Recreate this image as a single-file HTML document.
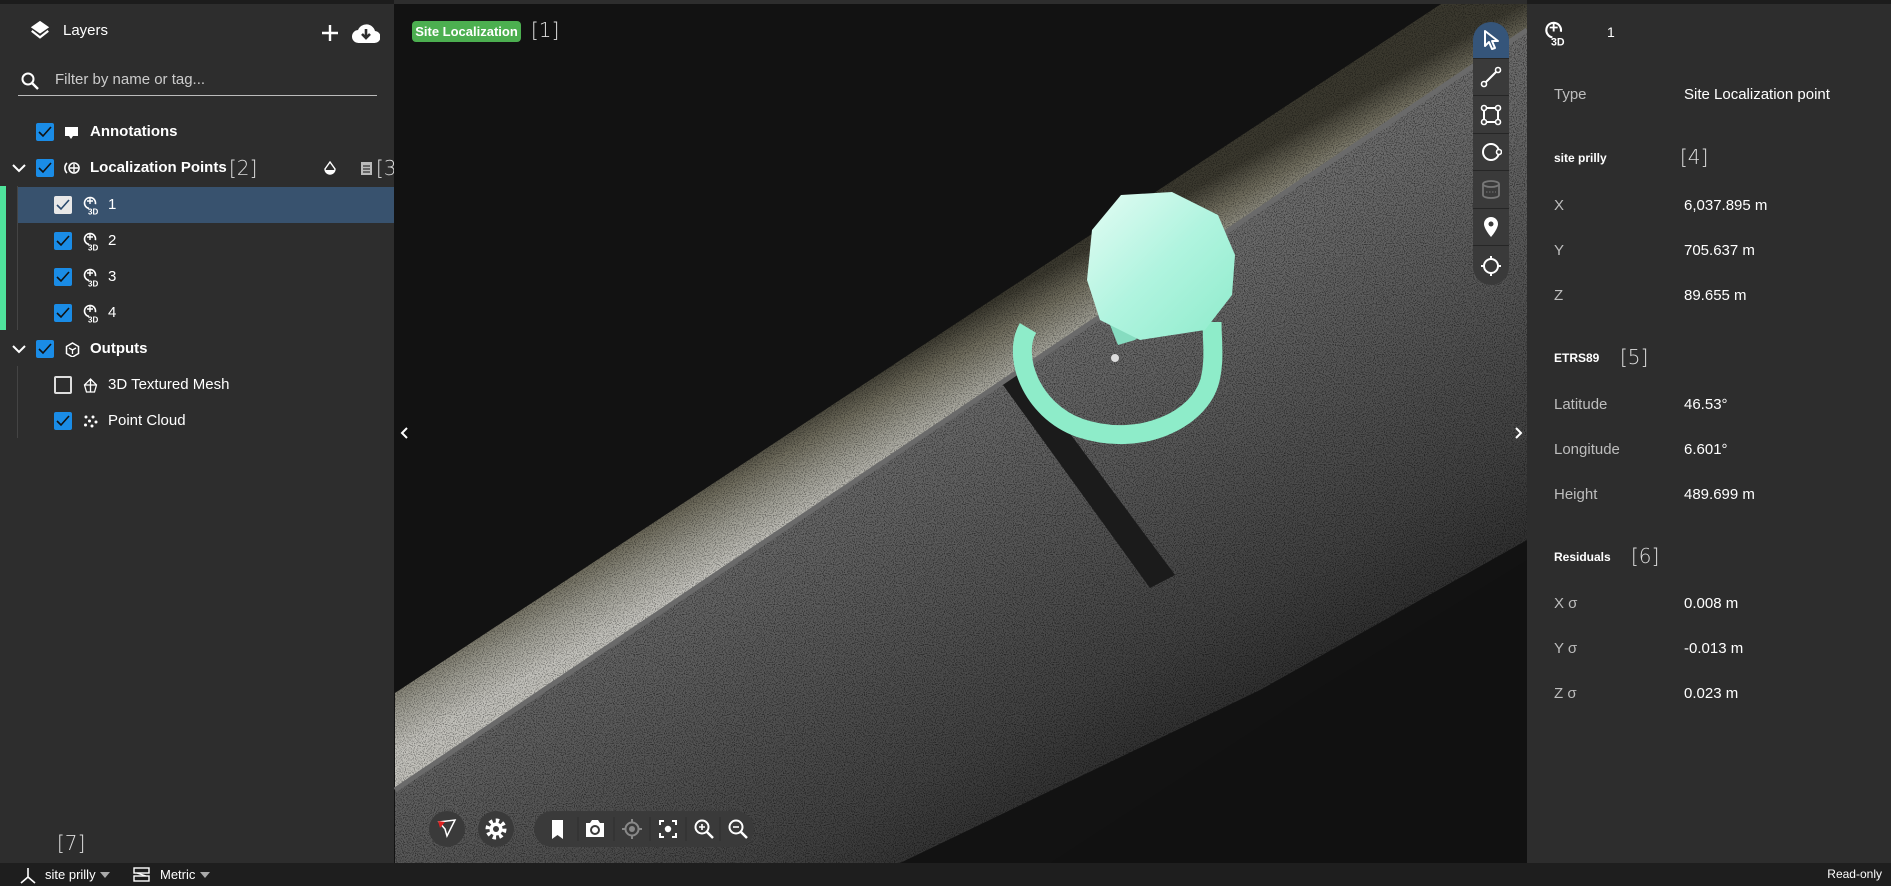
<!DOCTYPE html>
<html><head><meta charset="utf-8">
<style>
*{box-sizing:border-box;margin:0;padding:0}
body{width:1891px;height:886px;overflow:hidden;background:#2d2d2d;font-family:"Liberation Sans",sans-serif;color:#fff;position:relative}
.abs{position:absolute}
#left{left:0;top:0;width:394px;height:863px;background:#2d2d2d;border-top:4px solid #1c1c1c}
#right{left:1527px;top:0;width:364px;height:863px;background:#2d2d2d;border-top:4px solid #1c1c1c}
#vp{left:394px;top:4px;width:1133px;height:859px;background:#121212;overflow:hidden}
#bar{left:0;top:863px;width:1891px;height:23px;background:#1e1e1e;font-size:13px}
.row{position:absolute;left:0;width:394px;height:36px;font-size:15px}
.cb{position:absolute;width:18px;height:18px;background:#1a8ce6;border-radius:2px;top:9px}
.cb svg{position:absolute;left:2px;top:3px}
.lbl{position:absolute;top:9px;font-size:15px}
.ann{font-family:"DejaVu Sans",sans-serif;color:#ddd;font-weight:300}
.k{position:absolute;left:27px;font-size:15px;color:#bdbdbd}
.v{position:absolute;left:157px;font-size:15px;color:#fff}
.h{position:absolute;left:27px;font-size:12px;font-weight:bold}
.tb{position:absolute;left:0;width:36px;height:37px;border-bottom:1px solid #262626;display:flex;align-items:center;justify-content:center}
</style></head><body>

<div id="left" class="abs">
  <svg class="abs" style="left:29px;top:15px" width="22" height="22" viewBox="0 0 24 24"><path d="M12 2L2 9l10 7 10-7z" fill="#fff"/><path d="M3 13l9 7 9-7" stroke="#fff" stroke-width="2.4" fill="none"/></svg>
  <div class="abs" style="left:63px;top:18px;font-size:15px">Layers</div>
  <svg class="abs" style="left:321px;top:20px" width="18" height="18"><path d="M9 1v16M1 9h16" stroke="#fff" stroke-width="2.4"/></svg>
  <svg class="abs" style="left:352px;top:19px" width="28" height="21" viewBox="0 0 28 21"><path d="M7 20h15a6 6 0 0 0 1-12A9 9 0 0 0 6 7a6.5 6.5 0 0 0 1 13z" fill="#fff"/><path d="M14 6v8M10 11l4 4 4-4" stroke="#2d2d2d" stroke-width="2.6" fill="none"/></svg>
  <svg class="abs" style="left:20px;top:67px" width="20" height="20"><circle cx="8" cy="8" r="5.5" stroke="#fff" stroke-width="2" fill="none"/><path d="M12 12l6 6" stroke="#fff" stroke-width="2.4"/></svg>
  <div class="abs" style="left:55px;top:67px;font-size:15px;color:#ccc">Filter by name or tag...</div>
  <div class="abs" style="left:18px;top:91px;width:359px;height:1px;background:#bbb"></div>

  <div class="abs" style="left:0;top:182px;width:6px;height:144px;background:#4fe39c"></div>
  <div class="abs" style="left:17px;top:182px;width:1px;height:144px;background:#444"></div>
  <div class="abs" style="left:17px;top:362px;width:1px;height:72px;background:#444"></div>

  <div class="row" style="top:110px">
    <div class="cb" style="left:36px"><svg width="14" height="12"><path d="M1 6l4 4 8-9" stroke="#111" stroke-width="1.6" fill="none"/></svg></div>
    <svg class="abs" style="left:64px;top:12px" width="15" height="14"><path d="M1 1h13v9H9l-2 3-2-3H1z" fill="#fff"/></svg>
    <div class="lbl" style="left:90px;font-weight:bold">Annotations</div>
  </div>
  <div class="row" style="top:146px">
    <svg class="abs" style="left:12px;top:13px" width="14" height="10"><path d="M1 2l6 6 6-6" stroke="#fff" stroke-width="2" fill="none"/></svg>
    <div class="cb" style="left:36px"><svg width="14" height="12"><path d="M1 6l4 4 8-9" stroke="#111" stroke-width="1.6" fill="none"/></svg></div>
    <svg class="abs" style="left:63px;top:10px" width="18" height="16"><path d="M4 3a7 7 0 0 0 0 10" stroke="#fff" stroke-width="1.6" fill="none"/><circle cx="11" cy="8" r="5" stroke="#fff" stroke-width="1.6" fill="none"/><path d="M11 4v8M7 8h8" stroke="#fff" stroke-width="1.4"/></svg>
    <div class="lbl" style="left:90px;font-weight:bold">Localization Points</div>
    <div class="lbl ann" style="left:229px;top:6px;font-size:20px">[2]</div>
    <svg class="abs" style="left:324px;top:11px" width="12" height="14"><path d="M6 1L1 8a5 5 0 0 0 10 0z" stroke="#fff" fill="none" stroke-width="1.4"/><path d="M1.5 9a4.6 4.6 0 0 0 9 0z" fill="#fff"/></svg>
    <svg class="abs" style="left:360px;top:10px" width="13" height="16"><rect x="1" y="2" width="11" height="13" fill="#bbb"/><path d="M3 6h7M3 9h7M3 12h7" stroke="#333" stroke-width="1.2"/></svg>
    <div class="lbl ann" style="left:376px;top:6px;font-size:20px">[3]</div>
  </div>
  <div class="row" style="top:183px;left:18px;width:376px;background:#38526e"></div>
  <div class="row" style="top:183px">
    <div class="cb" style="left:54px;background:#e8e8e8"><svg width="14" height="12"><path d="M1 6l4 4 8-9" stroke="#2a4a6e" stroke-width="1.6" fill="none"/></svg></div>
    <svg class="abs" style="left:82px;top:9px" width="18" height="19" viewBox="0 0 18 19"><circle cx="8" cy="7" r="5.5" stroke="#fff" stroke-width="1.6" fill="none" stroke-dasharray="26 9" transform="rotate(100 8 7)"/><path d="M8 2v6M5 5h6" stroke="#fff" stroke-width="1.4"/><text x="6" y="18.5" font-size="8" font-weight="bold" fill="#fff" font-family="Liberation Sans">3D</text></svg>
    <div class="lbl" style="left:108px">1</div>
  </div>
  <div class="row" style="top:219px">
    <div class="cb" style="left:54px"><svg width="14" height="12"><path d="M1 6l4 4 8-9" stroke="#111" stroke-width="1.6" fill="none"/></svg></div>
    <svg class="abs" style="left:82px;top:9px" width="18" height="19" viewBox="0 0 18 19"><circle cx="8" cy="7" r="5.5" stroke="#fff" stroke-width="1.6" fill="none" stroke-dasharray="26 9" transform="rotate(100 8 7)"/><path d="M8 2v6M5 5h6" stroke="#fff" stroke-width="1.4"/><text x="6" y="18.5" font-size="8" font-weight="bold" fill="#fff" font-family="Liberation Sans">3D</text></svg>
    <div class="lbl" style="left:108px">2</div>
  </div>
  <div class="row" style="top:255px">
    <div class="cb" style="left:54px"><svg width="14" height="12"><path d="M1 6l4 4 8-9" stroke="#111" stroke-width="1.6" fill="none"/></svg></div>
    <svg class="abs" style="left:82px;top:9px" width="18" height="19" viewBox="0 0 18 19"><circle cx="8" cy="7" r="5.5" stroke="#fff" stroke-width="1.6" fill="none" stroke-dasharray="26 9" transform="rotate(100 8 7)"/><path d="M8 2v6M5 5h6" stroke="#fff" stroke-width="1.4"/><text x="6" y="18.5" font-size="8" font-weight="bold" fill="#fff" font-family="Liberation Sans">3D</text></svg>
    <div class="lbl" style="left:108px">3</div>
  </div>
  <div class="row" style="top:291px">
    <div class="cb" style="left:54px"><svg width="14" height="12"><path d="M1 6l4 4 8-9" stroke="#111" stroke-width="1.6" fill="none"/></svg></div>
    <svg class="abs" style="left:82px;top:9px" width="18" height="19" viewBox="0 0 18 19"><circle cx="8" cy="7" r="5.5" stroke="#fff" stroke-width="1.6" fill="none" stroke-dasharray="26 9" transform="rotate(100 8 7)"/><path d="M8 2v6M5 5h6" stroke="#fff" stroke-width="1.4"/><text x="6" y="18.5" font-size="8" font-weight="bold" fill="#fff" font-family="Liberation Sans">3D</text></svg>
    <div class="lbl" style="left:108px">4</div>
  </div>
  <div class="row" style="top:327px">
    <svg class="abs" style="left:12px;top:13px" width="14" height="10"><path d="M1 2l6 6 6-6" stroke="#fff" stroke-width="2" fill="none"/></svg>
    <div class="cb" style="left:36px"><svg width="14" height="12"><path d="M1 6l4 4 8-9" stroke="#111" stroke-width="1.6" fill="none"/></svg></div>
    <svg class="abs" style="left:65px;top:11px" width="15" height="15"><path d="M7.5 1l6 3.5v7l-6 3.5-6-3.5v-7z" stroke="#fff" stroke-width="1.5" fill="none"/><path d="M4 6l3.5 2 3.5-2M7.5 8v4" stroke="#fff" stroke-width="1.3" fill="none"/></svg>
    <div class="lbl" style="left:90px;font-weight:bold">Outputs</div>
  </div>
  <div class="row" style="top:363px">
    <div class="cb" style="left:54px;background:none;border:2px solid #ddd"></div>
    <svg class="abs" style="left:83px;top:11px" width="15" height="15"><path d="M7.5 1l6 6-2 7h-8l-2-7z M7.5 1v13M1.5 7h12" stroke="#fff" stroke-width="1.3" fill="none"/></svg>
    <div class="lbl" style="left:108px">3D Textured Mesh</div>
  </div>
  <div class="row" style="top:399px">
    <div class="cb" style="left:54px"><svg width="14" height="12"><path d="M1 6l4 4 8-9" stroke="#111" stroke-width="1.6" fill="none"/></svg></div>
    <svg class="abs" style="left:83px;top:11px" width="15" height="15" fill="#fff"><circle cx="3" cy="3" r="1.5"/><circle cx="10" cy="3" r="1.5"/><circle cx="6.5" cy="7" r="1.5"/><circle cx="13" cy="8" r="1.5"/><circle cx="2.5" cy="11" r="1.5"/><circle cx="9" cy="12" r="1.5"/></svg>
    <div class="lbl" style="left:108px">Point Cloud</div>
  </div>
  <div class="abs ann" style="left:57px;top:827px;font-size:20px">[7]</div>
</div>

<div id="vp" class="abs">
<svg width="1133" height="859" viewBox="394 4 1133 859">
  <defs>
    <filter id="n" x="0" y="0" width="100%" height="100%">
      <feTurbulence type="fractalNoise" baseFrequency="0.9" numOctaves="1" seed="3" result="t"/>
      <feColorMatrix type="matrix" values="0 0 0 0 0  0 0 0 0 0  0 0 0 0 0  0 0 0 -5 2.6" in="t" result="d"/>
      <feComposite in="d" in2="SourceGraphic" operator="in"/>
    </filter>
    <linearGradient id="gr" x1="0.2" y1="0.1" x2="0.8" y2="0.9">
      <stop offset="0" stop-color="#858380"/><stop offset="0.45" stop-color="#6a6a6a"/><stop offset="0.8" stop-color="#404040"/><stop offset="1" stop-color="#1e1e1e"/>
    </linearGradient>
    <linearGradient id="cu" gradientUnits="userSpaceOnUse" x1="900" y1="355" x2="948" y2="440">
      <stop offset="0" stop-color="#3a382e"/><stop offset="0.3" stop-color="#6e6b5c"/><stop offset="0.65" stop-color="#9d9c92"/><stop offset="1" stop-color="#c2c1bb"/>
    </linearGradient>
    <linearGradient id="sp" x1="0" y1="0" x2="1" y2="1">
      <stop offset="0" stop-color="#e4fcf4"/><stop offset="0.5" stop-color="#b0f4df"/><stop offset="1" stop-color="#8eebcb"/>
    </linearGradient>
  </defs>
  <polygon points="395,790 1527,30 1527,540 1260,690 900,863 395,863" fill="url(#gr)"/>
  <polygon points="395,790 1527,30 1527,540 1260,690 900,863 395,863" fill="#000" filter="url(#n)" opacity="0.45"/>
  <polygon points="1050,863 1300,700 1527,560 1527,863" fill="#121212" opacity="0.9"/>
  <polygon points="995,374 1020,366 1175,575 1150,588" fill="#1b1b1b"/>
  <polygon points="395,693 1441,4 1527,4 1527,30 395,790" fill="url(#cu)"/>
  <polygon points="395,693 1441,4 1527,4 1527,30 395,790" fill="#000" filter="url(#n)" opacity="0.35"/>
  <path d="M395,790 L1527,30" stroke="#6a6a6a" stroke-width="5"/>
  <path d="M1028,328 C1012,355 1030,410 1080,428 C1140,448 1200,420 1210,380 C1215,360 1212,340 1212,322" stroke="#8eecc9" stroke-width="19" fill="none"/>
  <polygon points="1100,300 1170,310 1135,340 1118,345" fill="#86dcc0"/>
  <polygon points="1121,195 1172,192 1218,215 1235,255 1232,295 1205,330 1140,340 1100,320 1087,280 1092,230" fill="url(#sp)"/>
  <circle cx="1115" cy="358" r="4" fill="#ddd"/>
</svg>
  <div class="abs" style="left:18px;top:17px;width:109px;height:21px;background:#4caf50;border-radius:4px;font-size:13px;font-weight:bold;line-height:21px;text-align:center">Site Localization</div>
  <div class="abs ann" style="left:137px;top:14px;font-size:20px">[1]</div>
  <svg class="abs" style="left:5px;top:422px" width="10" height="14"><path d="M8 2L3 7l5 5" stroke="#fff" stroke-width="2" fill="none"/></svg>
  <svg class="abs" style="left:1120px;top:422px" width="10" height="14"><path d="M2 2l5 5-5 5" stroke="#fff" stroke-width="2" fill="none"/></svg>
  <div class="abs" style="left:1079px;top:18px;width:36px;height:263px;background:#3a3a3a;border-radius:18px;overflow:hidden">
    <div class="tb" style="top:0;background:#35557a"><svg width="20" height="22"><path d="M4 2v15l4-4 3 7 3-1-3-7h6z" stroke="#fff" stroke-width="2" fill="none" stroke-linejoin="round"/></svg></div>
    <div class="tb" style="top:37px"><svg width="22" height="22"><path d="M5 17L17 5" stroke="#fff" stroke-width="2"/><circle cx="4" cy="18" r="2.5" stroke="#fff" stroke-width="1.6" fill="#3a3a3a"/><circle cx="18" cy="4" r="2.5" stroke="#fff" stroke-width="1.6" fill="#3a3a3a"/></svg></div>
    <div class="tb" style="top:75px"><svg width="22" height="22"><rect x="4" y="4" width="14" height="14" stroke="#fff" stroke-width="2" fill="none"/><g stroke="#fff" stroke-width="1.6" fill="#3a3a3a"><circle cx="4" cy="4" r="2.5"/><circle cx="18" cy="4" r="2.5"/><circle cx="4" cy="18" r="2.5"/><circle cx="18" cy="18" r="2.5"/></g></svg></div>
    <div class="tb" style="top:112px"><svg width="22" height="22"><circle cx="11" cy="11" r="8" stroke="#fff" stroke-width="2" fill="none"/><circle cx="19" cy="11" r="2.5" stroke="#fff" stroke-width="1.6" fill="#3a3a3a"/></svg></div>
    <div class="tb" style="top:150px"><svg width="22" height="22"><ellipse cx="11" cy="5" rx="8" ry="3" stroke="#777" stroke-width="1.8" fill="none"/><path d="M3 5v11c0 4 16 4 16 0V5" stroke="#777" stroke-width="1.8" fill="none"/><path d="M6 13h10" stroke="#777" stroke-dasharray="1.5 1.5"/></svg></div>
    <div class="tb" style="top:187px"><svg width="22" height="22"><path d="M11 21s-7-8-7-13a7 7 0 0 1 14 0c0 5-7 13-7 13z" fill="#fff"/><circle cx="11" cy="8" r="2.5" fill="#3a3a3a"/></svg></div>
    <div class="tb" style="top:225px;border:0"><svg width="22" height="22"><circle cx="11" cy="11" r="7" stroke="#fff" stroke-width="2" fill="none"/><path d="M11 1v4M11 17v4M1 11h4M17 11h4" stroke="#fff" stroke-width="2"/></svg></div>
  </div>
  <div class="abs" style="left:35px;top:807px;width:36px;height:36px;border-radius:18px;background:#3a3a3a"><svg width="36" height="36"><path d="M10 11l16-2-8 16-2-7z" stroke="#fff" stroke-width="1.5" fill="none"/><path d="M9 10l7 1-5 6z" fill="#e02020"/></svg></div>
  <div class="abs" style="left:84px;top:807px;width:36px;height:36px;border-radius:18px;background:#3a3a3a"><svg width="36" height="36"><circle cx="18" cy="18" r="8" fill="none" stroke="#fff" stroke-width="5" stroke-dasharray="3.2 3"/><circle cx="18" cy="18" r="6.5" fill="#fff"/><circle cx="18" cy="18" r="3" fill="#3a3a3a"/></svg></div>
  <div class="abs" style="left:140px;top:807px;width:220px;height:36px;border-radius:18px;background:#3a3a3a">
    <svg width="220" height="36">
      <path d="M18 9h11v19l-5.5-4-5.5 4z" fill="#fff"/>
      <path d="M52 12h4l2-3h6l2 3h4v14H52z" fill="#fff"/><circle cx="61" cy="19" r="4" stroke="#3a3a3a" stroke-width="2" fill="none"/>
      <circle cx="98" cy="18" r="6.5" stroke="#888" stroke-width="2" fill="none"/><circle cx="98" cy="18" r="3" fill="#888"/><path d="M98 8v3M98 25v3M88 18h3M105 18h3" stroke="#888" stroke-width="2"/>
      <path d="M126 14v-4h4M138 10h4v4M142 22v4h-4M130 26h-4v-4" stroke="#fff" stroke-width="2" fill="none"/><circle cx="134" cy="18" r="3.2" fill="#fff"/>
      <circle cx="168" cy="16" r="6.5" stroke="#fff" stroke-width="2" fill="none"/><path d="M173 21l6 6" stroke="#fff" stroke-width="2.5"/><path d="M168 13v6M165 16h6" stroke="#fff" stroke-width="1.6"/>
      <circle cx="202" cy="16" r="6.5" stroke="#fff" stroke-width="2" fill="none"/><path d="M207 21l6 6" stroke="#fff" stroke-width="2.5"/><path d="M199 16h6" stroke="#fff" stroke-width="1.6"/>
      <path d="M44 6v24M80 6v24M116 6v24M152 6v24M186 6v24" stroke="#2e2e2e" stroke-width="1"/>
    </svg>
  </div>
</div>

<div id="right" class="abs">
  <svg class="abs" style="left:16px;top:16px" width="24" height="27" viewBox="0 0 18 19"><circle cx="8" cy="7" r="5.5" stroke="#fff" stroke-width="1.6" fill="none" stroke-dasharray="26 9" transform="rotate(100 8 7)"/><path d="M8 2v6M5 5h6" stroke="#fff" stroke-width="1.4"/><text x="6" y="18.5" font-size="8" font-weight="bold" fill="#fff" font-family="Liberation Sans">3D</text></svg>
  <div class="abs" style="left:80px;top:20px;font-size:14px">1</div>
  <div class="k" style="top:82px">Type</div><div class="v" style="top:82px">Site Localization point</div>
  <div class="h" style="top:147px">site prilly</div><div class="abs ann" style="left:153px;top:141px;font-size:20px">[4]</div>
  <div class="k" style="top:193px">X</div><div class="v" style="top:193px">6,037.895 m</div>
  <div class="k" style="top:238px">Y</div><div class="v" style="top:238px">705.637 m</div>
  <div class="k" style="top:283px">Z</div><div class="v" style="top:283px">89.655 m</div>
  <div class="h" style="top:347px">ETRS89</div><div class="abs ann" style="left:93px;top:341px;font-size:20px">[5]</div>
  <div class="k" style="top:392px">Latitude</div><div class="v" style="top:392px">46.53°</div>
  <div class="k" style="top:437px">Longitude</div><div class="v" style="top:437px">6.601°</div>
  <div class="k" style="top:482px">Height</div><div class="v" style="top:482px">489.699 m</div>
  <div class="h" style="top:546px">Residuals</div><div class="abs ann" style="left:104px;top:540px;font-size:20px">[6]</div>
  <div class="k" style="top:591px">X σ</div><div class="v" style="top:591px">0.008 m</div>
  <div class="k" style="top:636px">Y σ</div><div class="v" style="top:636px">-0.013 m</div>
  <div class="k" style="top:681px">Z σ</div><div class="v" style="top:681px">0.023 m</div>
</div>

<div id="bar" class="abs">
  <svg class="abs" style="left:19px;top:3px" width="18" height="18"><path d="M9 2v9M9 11l-7 6M9 11l7 6" stroke="#fff" stroke-width="1.6" fill="none"/></svg>
  <div class="abs" style="left:45px;top:4px">site prilly</div>
  <svg class="abs" style="left:100px;top:9px" width="10" height="6"><path d="M0 0h10L5 6z" fill="#aaa"/></svg>
  <svg class="abs" style="left:133px;top:4px" width="17" height="15"><rect x="1" y="1" width="15" height="5" stroke="#fff" stroke-width="1.4" fill="none"/><rect x="1" y="9" width="15" height="5" stroke="#fff" stroke-width="1.4" fill="none"/><path d="M4 6l9 3" stroke="#fff" stroke-width="1.4"/></svg>
  <div class="abs" style="left:160px;top:4px">Metric</div>
  <svg class="abs" style="left:200px;top:9px" width="10" height="6"><path d="M0 0h10L5 6z" fill="#aaa"/></svg>
  <div class="abs" style="right:9px;top:4px;font-size:12px">Read-only</div>
</div>
</body></html>
